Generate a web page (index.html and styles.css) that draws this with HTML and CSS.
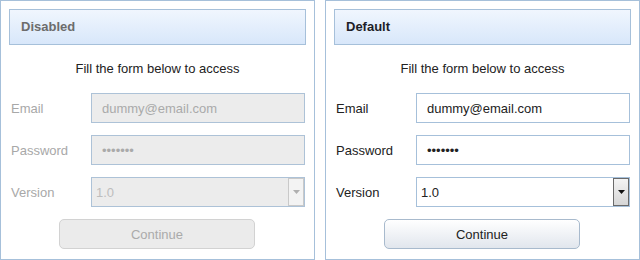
FILE: index.html
```html
<!DOCTYPE html>
<html lang="en">
<head>
    <meta charset="UTF-8">
    <title>Form states</title>
    <link rel="stylesheet" href="styles.css">
</head>
<body>
    <div class="panels">
        <section class="panel is-disabled">
            <h2 class="panel-title">Disabled</h2>
            <p class="intro">Fill the form below to access</p>
            <form class="form">
                <label class="label" for="d-email">Email</label>
                <input class="field" id="d-email" type="text" value="dummy@email.com" disabled>

                <label class="label" for="d-pass">Password</label>
                <input class="field" id="d-pass" type="password" value="1234567" disabled>

                <label class="label" for="d-version">Version</label>
                <div class="select">
                    <select id="d-version" disabled><option>1.0</option></select>
                    <span class="drop"><svg width="7" height="4" viewBox="0 0 7 4"><path d="M0 0h7L3.5 4z"/></svg></span>
                </div>

                <button class="continue" type="button" disabled>Continue</button>
            </form>
        </section>

        <section class="panel">
            <h2 class="panel-title">Default</h2>
            <p class="intro">Fill the form below to access</p>
            <form class="form">
                <label class="label" for="email">Email</label>
                <input class="field" id="email" type="text" value="dummy@email.com">

                <label class="label" for="pass">Password</label>
                <input class="field" id="pass" type="password" value="1234567">

                <label class="label" for="version">Version</label>
                <div class="select">
                    <select id="version"><option>1.0</option></select>
                    <span class="drop"><svg width="7" height="4" viewBox="0 0 7 4"><path d="M0 0h7L3.5 4z"/></svg></span>
                </div>

                <button class="continue" type="button">Continue</button>
            </form>
        </section>
    </div>
</body>
</html>
```

FILE: styles.css
```css
* {
    box-sizing: border-box;
}
body {
    margin: 0;
    background: #fff;
    color: #222;
    font-family: "Liberation Sans", Arial, sans-serif;
    font-size: 13px;
}
.panels {
    display: flex;
    gap: 10px;
}
.panel {
    width: 315px;
    height: 260px;
    padding: 8px;
    border: 1px solid #a6c0da;
    background: #fff;
}
.panel-title {
    margin: 0;
    height: 36px;
    padding: 0 11px;
    border: 1px solid #a6c0da;
    background: linear-gradient(#f0f6fe, #d8e7fa);
    font-size: 13px;
    font-weight: bold;
    line-height: 34px;
    color: #1e1e28;
}
.intro {
    margin: 16px 0;
    line-height: 16px;
    text-align: center;
}
.form {
    display: grid;
    grid-template-columns: 82px 1fr;
    row-gap: 12px;
    margin: 0 1px 0 0;
}
.label {
    align-self: center;
    padding-left: 2px;
}
.field {
    height: 30px;
    padding: 0 10px;
    border: 1px solid #a6c0da;
    background: #fff;
    color: #222;
    font-family: inherit;
    font-size: 13px;
    outline: none;
}
.select {
    display: flex;
    height: 30px;
    padding: 0;
    border: 1px solid #a6c0da;
    background: #fff;
}
.select select {
    flex: 1;
    min-width: 0;
    padding: 0 4px;
    border: none;
    background: transparent;
    -webkit-appearance: none;
    appearance: none;
    color: #222;
    font-family: inherit;
    font-size: 13px;
    outline: none;
}
.drop {
    display: flex;
    align-items: center;
    justify-content: center;
    width: 16px;
    border: 1px solid #6a6a6a;
    background: linear-gradient(#f4f4f4, #d6d6d6);
}
.drop svg {
    fill: #111;
}
.continue {
    grid-column: 1 / -1;
    justify-self: center;
    width: 196px;
    height: 30px;
    border: 1px solid #a8bacd;
    border-radius: 5px;
    background: linear-gradient(#ffffff, #e1e6ed);
    color: #222;
    font-family: inherit;
    font-size: 13px;
}

/* disabled state */
.is-disabled .panel-title {
    color: #6c6c6c;
}
.is-disabled .label {
    color: #a8a8a8;
}
.is-disabled .field,
.is-disabled .select {
    background: #ececec;
    color: #aaa;
    border-color: #adc2d7;
}
.is-disabled .select select {
    color: #aaa;
}
.is-disabled .drop {
    border-color: #c9c9c9;
    background: #f3f3f3;
}
.is-disabled .drop svg {
    fill: #b0b0b0;
}
.is-disabled .continue {
    border-color: #d2d2d2;
    background: #ebebeb;
    color: #aaa;
}
```
